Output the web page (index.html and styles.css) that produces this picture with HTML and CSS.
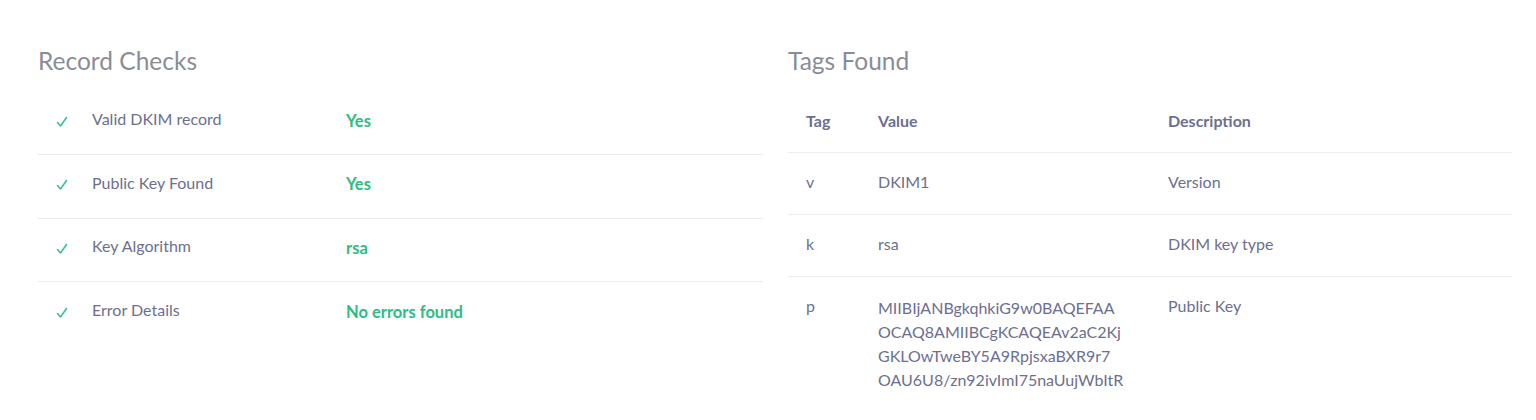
FILE: index.html
```html
<!DOCTYPE html>
<html lang="en">
  <head>
    <meta charset="UTF-8" />
    <title>DKIM Record Lookup</title>
    <link rel="stylesheet" href="styles.css">
  </head>
  <body>
    <div class="results">
      <div class="panel">
        <h2 class="panel-title">Record Checks</h2>
        <table class="checks">
          <tr>
            <td class="check-icon">
              <svg width="12" height="12" viewBox="0 0 12 12"><polyline points="1.5,6.5 4.5,10 10.5,1.5" /></svg>
            </td>
            <td class="check-label">Valid DKIM record</td>
            <td class="check-value">Yes</td>
          </tr>
          <tr>
            <td class="check-icon">
              <svg width="12" height="12" viewBox="0 0 12 12"><polyline points="1.5,6.5 4.5,10 10.5,1.5" /></svg>
            </td>
            <td class="check-label">Public Key Found</td>
            <td class="check-value">Yes</td>
          </tr>
          <tr>
            <td class="check-icon">
              <svg width="12" height="12" viewBox="0 0 12 12"><polyline points="1.5,6.5 4.5,10 10.5,1.5" /></svg>
            </td>
            <td class="check-label">Key Algorithm</td>
            <td class="check-value">rsa</td>
          </tr>
          <tr>
            <td class="check-icon">
              <svg width="12" height="12" viewBox="0 0 12 12"><polyline points="1.5,6.5 4.5,10 10.5,1.5" /></svg>
            </td>
            <td class="check-label">Error Details</td>
            <td class="check-value">No errors found</td>
          </tr>
        </table>
      </div>

      <div class="panel">
        <h2 class="panel-title">Tags Found</h2>
        <table class="tags">
          <tr class="tags-head">
            <th class="tag-col">Tag</th>
            <th class="value-col">Value</th>
            <th>Description</th>
          </tr>
          <tr>
            <td>v</td>
            <td>DKIM1</td>
            <td>Version</td>
          </tr>
          <tr>
            <td>k</td>
            <td>rsa</td>
            <td>DKIM key type</td>
          </tr>
          <tr>
            <td>p</td>
            <td class="key-value">
              <span>MIIBIjANBgkqhkiG9w0BAQEFAA</span>
              <span>OCAQ8AMIIBCgKCAQEAv2aC2Kj</span>
              <span>GKLOwTweBY5A9RpjsxaBXR9r7</span>
              <span>OAU6U8/zn92ivImI75naUujWbItR</span>
            </td>
            <td>Public Key</td>
          </tr>
        </table>
      </div>
    </div>
  </body>
</html>
```

FILE: styles.css
```css
body {
  margin: 0;
  font-family: "Lato", "Open Sans", sans-serif;
  background: #ffffff;
  color: #6c6f8f;
}
.results {
  display: grid;
  grid-template-columns: 725px 724px;
  gap: 25px;
  padding: 46px 0 0 38px;
}
.panel-title {
  margin: 0 0 15px 0;
  font-size: 24.5px;
  line-height: 30px;
  font-weight: 400;
  color: #8b8d96;
}
table {
  width: 100%;
  border-collapse: collapse;
  table-layout: fixed;
}
.checks tr {
  height: 63.5px;
  border-bottom: 1px solid #ececf4;
}
.checks tr:last-child {
  border-bottom: none;
}
.checks td {
  padding: 0 0 4px 0;
  vertical-align: middle;
}
.check-icon {
  width: 36px;
  padding-left: 18px !important;
}
.check-icon svg {
  display: block;
  margin-top: 2px;
}
.check-icon polyline {
  fill: none;
  stroke: #3cc28d;
  stroke-width: 1.6;
  stroke-linecap: round;
  stroke-linejoin: round;
}
.check-label {
  width: 254px;
  font-size: 16px;
  padding-bottom: 8px !important;
}
.check-value {
  font-size: 16.5px;
  font-weight: 700;
  color: #2dbd84;
}
.tags tr {
  height: 62px;
  border-bottom: 1px solid #ececf4;
}
.tags tr.tags-head {
  height: 61.5px;
}
.tags tr:last-child {
  border-bottom: none;
}
.tags th,
.tags td {
  text-align: left;
  font-size: 16px;
  padding: 0 0 4px 18px;
  vertical-align: middle;
}
.tags th {
  font-weight: 700;
  padding-bottom: 2px;
}
.tags tr:last-child td {
  vertical-align: top;
  padding-top: 19px;
}
.tags .tag-col {
  width: 54px;
}
.tags .value-col {
  width: 272px;
}
.key-value span {
  display: block;
  line-height: 24px;
}
.tags td.key-value {
  padding-top: 13px;
}
```
